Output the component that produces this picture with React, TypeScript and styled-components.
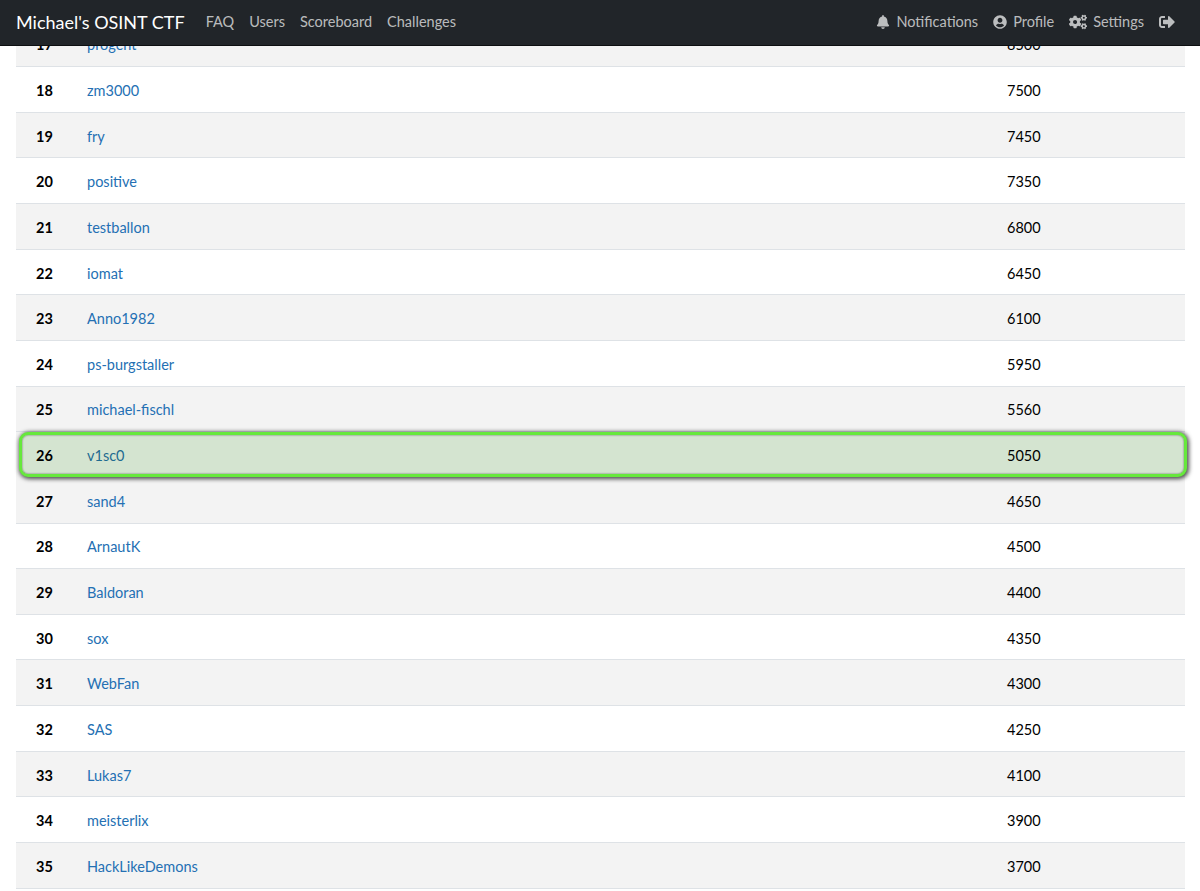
import React from "react";
import styled, { createGlobalStyle } from "styled-components";
import { FaBell, FaUserCircle, FaCogs, FaSignOutAlt } from "react-icons/fa";

const Global = createGlobalStyle`
  html, body { margin: 0; padding: 0; height: 891px; overflow: hidden; background: #fff; }
  body { font-family: Lato, "Liberation Sans", sans-serif; font-size: 14.5px; color: #000; }
`;

const NavBar = styled.nav`
  position: fixed; top: 0; left: 0; right: 0; height: 46px; z-index: 5;
  box-sizing: border-box; background: #212529; border-bottom: 1px solid #0d0f11;
  display: flex; align-items: center; padding: 0 25px 2px 16px;
`;
const Brand = styled.a`
  color: #fff; font-size: 18px; margin-right: 21px; white-space: nowrap;
`;
const NavList = styled.div<{ $right?: boolean }>`
  display: flex; align-items: center; gap: ${(p) => (p.$right ? "15px" : "15px")}; ${(p) => (p.$right ? "margin-left: auto;" : "")}
`;
const NavLink = styled.a`
  color: rgba(255, 255, 255, 0.7); font-size: 14.5px; display: flex; align-items: center; gap: 6px; white-space: nowrap;
  svg { display: block; }
`;
const Board = styled.main`
  padding: 21.5px 15px 0 16px;
`;
const Row = styled.div<{ $odd: boolean; $me?: boolean }>`
  display: grid; grid-template-columns: 71px 920px 1fr; align-items: center;
  box-sizing: border-box; height: 45.65px; padding-top: 2px; border-bottom: 1px solid #dee2e6;
  background: ${(p) => (p.$odd ? "#f3f3f3" : "#fff")};
  ${(p) => p.$me ? `position: relative; background: #f3f3f3; border-bottom-color: #f3f3f3;` : ""}
`;
const Highlight = styled.div`
  position: absolute; left: 3px; right: -2px; top: 0; bottom: 0;
  box-sizing: border-box; border: 3px solid #66e83c; border-radius: 9px; background: #d4e4d0;
  box-shadow: 1px 1px 4px 1px rgba(0,0,0,.7), inset 0 0 2px rgba(0,0,0,.6);
`;
const Cell = styled.div`position: relative;`;
const Rank = styled(Cell)`font-weight: 700; padding-left: 20px;`;
const Name = styled.a`position: relative; color: #2470b3;`;
const MeName = styled(Name)`color: #1f6b90;`;

const rows: [number, string, number][] = [
  [17,"progent",8500],[18,"zm3000",7500],[19,"fry",7450],[20,"positive",7350],[21,"testballon",6800],
  [22,"iomat",6450],[23,"Anno1982",6100],[24,"ps-burgstaller",5950],[25,"michael-fischl",5560],[26,"v1sc0",5050],
  [27,"sand4",4650],[28,"ArnautK",4500],[29,"Baldoran",4400],[30,"sox",4350],[31,"WebFan",4300],[32,"SAS",4250],
  [33,"Lukas7",4100],[34,"meisterlix",3900],[35,"HackLikeDemons",3700],
];

export default function App() {
  return (
    <>
      <Global />
      <NavBar>
        <Brand>Michael's OSINT CTF</Brand>
        <NavList>
          <NavLink>FAQ</NavLink><NavLink>Users</NavLink><NavLink>Scoreboard</NavLink><NavLink>Challenges</NavLink>
        </NavList>
        <NavList $right>
          <NavLink><FaBell size={14} />Notifications</NavLink>
          <NavLink><FaUserCircle size={14} />Profile</NavLink>
          <NavLink><FaCogs size={18} />Settings</NavLink>
          <NavLink><FaSignOutAlt size={16} /></NavLink>
        </NavList>
      </NavBar>
      <Board>
        {rows.map(([r, n, s]) => {
          const me = r === 26;
          const L = me ? MeName : Name;
          return (
            <Row key={r} $odd={r % 2 === 1} $me={me}>
              {me && <Highlight />}
              <Rank>{r}</Rank>
              <Cell><L>{n}</L></Cell>
              <Cell>{s}</Cell>
            </Row>
          );
        })}
      </Board>
    </>
  );
}
